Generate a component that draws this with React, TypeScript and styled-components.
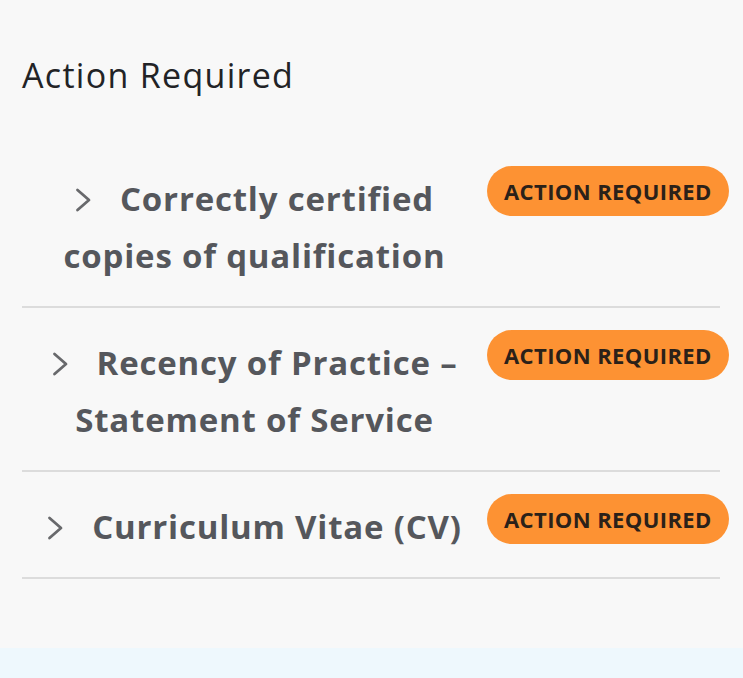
import React from 'react';
import styled, { createGlobalStyle } from 'styled-components';

const GlobalStyle = createGlobalStyle`
  html, body {
    margin: 0;
    padding: 0;
    background: #f8f8f8;
  }
  * {
    box-sizing: border-box;
  }
`;

const Page = styled.div`
  min-height: 678px;
  display: flex;
  flex-direction: column;
  background: #f8f8f8;
  font-family: 'Open Sans', 'Noto Sans', sans-serif;
`;

const Heading = styled.h1`
  margin: 0;
  padding: 52px 0 0 22px;
  font-size: 34px;
  line-height: 46px;
  font-weight: 500;
  letter-spacing: 1.3px;
  color: #222326;
`;

const List = styled.div`
  margin-top: 46px;
`;

const Row = styled.div`
  display: flex;
  align-items: flex-start;
  padding: 26px 15px 22px 22px;
`;

const TitleCell = styled.div`
  flex: 0 0 465px;
  padding: 0 12px;
  text-align: center;
  font-size: 33px;
  line-height: 57px;
  font-weight: 700;
  letter-spacing: 0.8px;
  color: #55575c;
`;

const Chevron = styled.svg`
  display: inline-block;
  width: 17px;
  height: 26px;
  margin-right: 28px;
  vertical-align: -2px;
`;

const Badge = styled.span`
  flex: none;
  margin-top: -4px;
  height: 50px;
  padding: 0 17px;
  border-radius: 25px;
  background: #fd9233;
  color: #2b2119;
  font-size: 22px;
  font-weight: 700;
  letter-spacing: 0.4px;
  display: flex;
  align-items: center;
  white-space: nowrap;
`;

const Divider = styled.div`
  height: 2px;
  margin: 0 23px 0 22px;
  background: #dcdcdc;
`;

const Spacer = styled.div`
  flex: 1;
`;

const BottomStrip = styled.div`
  height: 30px;
  background: #eef8fd;
`;

const items = [
  'Correctly certified copies of qualification',
  'Recency of Practice \u2013 Statement of Service',
  'Curriculum Vitae (CV)',
];

const App: React.FC = () => {
  return (
    <>
      <GlobalStyle />
      <Page>
        <Heading>Action Required</Heading>
        <List>
          {items.map((title, index) => (
            <React.Fragment key={index}>
              <Row>
                <TitleCell>
                  <Chevron viewBox="0 0 17 26">
                    <path
                      d="M2.5 3 L14 13 L2.5 23"
                      fill="none"
                      stroke="#68696c"
                      strokeWidth="2.8"
                      strokeLinecap="round"
                      strokeLinejoin="round"
                    />
                  </Chevron>
                  {title}
                </TitleCell>
                <Badge>ACTION REQUIRED</Badge>
              </Row>
              <Divider />
            </React.Fragment>
          ))}
        </List>
        <Spacer />
        <BottomStrip />
      </Page>
    </>
  );
};

export default App;
